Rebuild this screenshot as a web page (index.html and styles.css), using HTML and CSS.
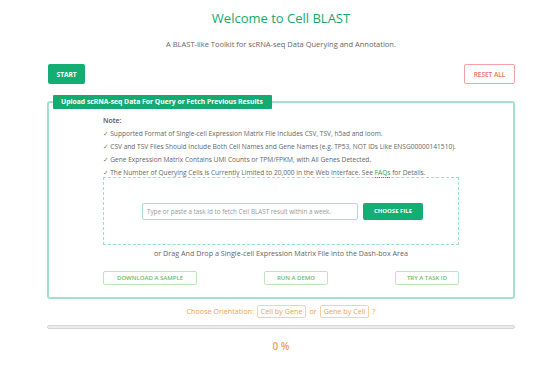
FILE: index.html
```html
<!DOCTYPE html>
<html>
<head>
<meta charset="utf-8">
<link rel="stylesheet" href="styles.css">
</head>
<body>
<div class="page">
  <h1 class="title">Welcome to Cell BLAST</h1>
  <p class="subtitle">A BLAST-like Toolkit for scRNA-seq Data Querying and Annotation.</p>
  <div class="actions">
    <button class="btn-start">START</button>
    <button class="btn-reset">RESET ALL</button>
  </div>
  <fieldset class="panel">
    <legend class="panel-tab">Upload scRNA-seq Data For Query or Fetch Previous Results</legend>
    <div class="panel-body">
      <div class="note-title">Note:</div>
      <ul class="notes">
        <li>✓ Supported Format of Single-cell Expression Matrix File Includes CSV, TSV, h5ad and loom.</li>
        <li>✓ CSV and TSV Files Should Include Both Cell Names and Gene Names (e.g. TP53, NOT IDs Like ENSG00000141510).</li>
        <li>✓ Gene Expression Matrix Contains UMI Counts or TPM/FPKM, with All Genes Detected.</li>
        <li>✓ The Number of Querying Cells is Currently Limited to 20,000 in the Web Interface. See <span class="link">FAQs</span> for Details.</li>
      </ul>
      <div class="dropzone">
        <input class="task-input" type="text" placeholder="Type or paste a task Id to fetch Cell BLAST result within a week.">
        <button class="btn-choose">CHOOSE FILE</button>
      </div>
      <p class="drag-hint">or Drag And Drop a Single-cell Expression Matrix File into the Dash-box Area</p>
      <div class="samples">
        <button class="btn-outline btn-wide">DOWNLOAD A SAMPLE</button>
        <button class="btn-outline">RUN A DEMO</button>
        <button class="btn-outline">TRY A TASK ID</button>
      </div>
    </div>
  </fieldset>
  <div class="orientation">
    <span>Choose Orientation:</span>
    <span class="opt">Cell by Gene</span>
    <span>or</span>
    <span class="opt">Gene by Cell</span>
    <span>?</span>
  </div>
  <div class="progress"><div class="progress-fill" style="width:0%"></div></div>
  <div class="percent">0 %</div>
</div>
</body>
</html>
```
FILE: styles.css
```css
* { box-sizing: border-box; }
html, body { margin: 0; padding: 0; background: #fff; }
body { font-family: "Open Sans", "DejaVu Sans", sans-serif; color: #666; }

.page {
  width: 468px;
  margin-left: 47px;
  padding-top: 8px;
}

.title {
  margin: 0;
  text-align: center;
  font-size: 13px;
  line-height: 20px;
  font-weight: 400;
  color: #17a96c;
}

.subtitle {
  margin: 10px 0 0;
  text-align: center;
  font-size: 7.5px;
  line-height: 12px;
  color: #666;
}

.actions {
  display: flex;
  justify-content: space-between;
  margin-top: 14px;
}

button { font-family: inherit; cursor: pointer; }

.btn-start {
  width: 37px;
  height: 20px;
  padding: 0;
  margin-left: 1px;
  background: #14ad73;
  color: #fff;
  border: none;
  border-radius: 2px;
  font-size: 6.5px;
  font-weight: 700;
}

.btn-reset {
  width: 51px;
  height: 20px;
  padding: 0;
  background: #fff;
  color: #f26b6b;
  border: 1px solid #f7a2a2;
  border-radius: 2px;
  font-size: 6.5px;
  font-weight: 600;
}

.panel {
  margin: 11px 0 0;
  padding: 0 4px;
  border: 2px solid #a2e2ca;
  border-radius: 3px;
  min-width: 0;
}

.panel-tab {
  height: 14px;
  padding: 0 9px 0 8px;
  background: #14ab72;
  color: #fff;
  font-size: 6.8px;
  font-weight: 700;
  line-height: 14px;
  border-radius: 1px;
}

.panel-body {
  padding: 5px 50px 12px;
}

.note-title {
  font-size: 7px;
  font-weight: 600;
  line-height: 13px;
  color: #555;
}

.notes {
  list-style: none;
  margin: 0;
  padding: 0;
}

.notes li {
  font-size: 6.6px;
  line-height: 13px;
  color: #666;
  white-space: nowrap;
}

.link {
  color: #1aa96e;
  border-bottom: 1px dotted #1aa96e;
}

.dropzone {
  margin-top: -2px;
  height: 68px;
  border: 1px dashed #9adfc5;
  display: flex;
  align-items: center;
  justify-content: center;
  gap: 5px;
  padding-left: 3px;
}

.task-input {
  width: 216px;
  height: 17px;
  border: 1.5px solid #a6e3cc;
  border-radius: 2px;
  padding: 0 4px;
  font-family: inherit;
  font-size: 6.3px;
  color: #666;
  outline: none;
}
.task-input::placeholder { color: #999; }

.btn-choose {
  width: 60px;
  height: 17px;
  padding: 0;
  border: none;
  border-radius: 2px;
  background: #14ad73;
  color: #fff;
  font-size: 6px;
  font-weight: 700;
}

.drag-hint {
  margin: 1px 0 0;
  text-align: center;
  font-size: 7.2px;
  line-height: 14px;
  color: #666;
}

.samples {
  display: flex;
  justify-content: space-between;
  margin-top: 11px;
}

.btn-outline {
  width: 64px;
  height: 14px;
  padding: 0;
  background: #fff;
  color: #6bbd69;
  border: 1px solid #bde4ba;
  border-radius: 2px;
  font-size: 6px;
  font-weight: 600;
}
.btn-wide { width: 94px; }

.orientation {
  margin-top: 6px;
  display: flex;
  justify-content: center;
  align-items: center;
  gap: 3px;
  font-size: 7.2px;
  line-height: 13px;
  color: #f6a04f;
}

.opt {
  border: 1px solid #fdd0a4;
  border-radius: 2px;
  padding: 0 3px;
  height: 13px;
  line-height: 11px;
}

.progress {
  margin-top: 7px;
  height: 4px;
  background: #ececec;
  border: 1px solid #d6d6d6;
  border-radius: 3px;
}
.progress-fill { height: 100%; background: #f6a45c; }

.percent {
  margin-top: 10px;
  text-align: center;
  font-size: 10px;
  font-weight: 600;
  line-height: 14px;
  color: #f6a04f;
}
```
